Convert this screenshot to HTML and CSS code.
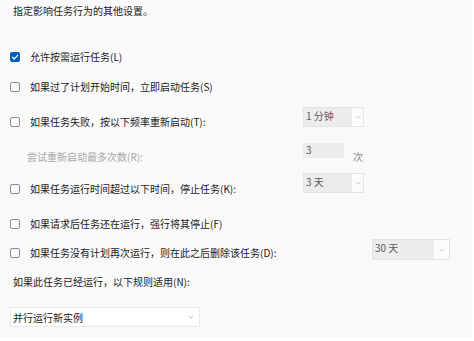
FILE: index.html
```html
<!DOCTYPE html>
<html lang="zh">
<head>
<meta charset="utf-8">
<link rel="stylesheet" href="styles.css">
</head>
<body>
<div class="panel">
  <div class="header">指定影响任务行为的其他设置。</div>

  <div class="row r1">
    <label class="opt"><span class="cb checked"><svg viewBox="0 0 10 10" width="10" height="10"><path d="M2.4 5.2 L4.2 7 L7.8 3.2" fill="none" stroke="#fff" stroke-width="1.2" stroke-linecap="round" stroke-linejoin="round"/></svg></span>允许按需运行任务(L)</label>
  </div>

  <div class="row r2">
    <label class="opt"><span class="cb"></span>如果过了计划开始时间，立即启动任务(S)</label>
  </div>

  <div class="row r3">
    <label class="opt lead w293"><span class="cb"></span>如果任务失败，按以下频率重新启动(T):</label>
    <div class="dd w61"><span class="field">1 分钟</span><span class="chev"><svg viewBox="0 0 6 4" width="6" height="4"><path d="M0.5 0.8 L3 3.2 L5.5 0.8" fill="none" stroke="#b8b8b8" stroke-width="0.8"/></svg></span></div>
  </div>

  <div class="row r4">
    <div class="sub w293">尝试重新启动最多次数(R):</div>
    <div class="tb">3</div>
    <div class="unit">次</div>
  </div>

  <div class="row r5">
    <label class="opt lead5 w293"><span class="cb"></span>如果任务运行时间超过以下时间，停止任务(K):</label>
    <div class="dd w61"><span class="field">3 天</span><span class="chev"><svg viewBox="0 0 6 4" width="6" height="4"><path d="M0.5 0.8 L3 3.2 L5.5 0.8" fill="none" stroke="#b8b8b8" stroke-width="0.8"/></svg></span></div>
  </div>

  <div class="row r6">
    <label class="opt"><span class="cb"></span>如果请求后任务还在运行，强行将其停止(F)</label>
  </div>

  <div class="row r7">
    <label class="opt lead w362"><span class="cb"></span>如果任务没有计划再次运行，则在此之后删除该任务(D):</label>
    <div class="dd w78 h21"><span class="field f61">30 天</span><span class="chev"><svg viewBox="0 0 6 4" width="6" height="4"><path d="M0.5 0.8 L3 3.2 L5.5 0.8" fill="none" stroke="#b8b8b8" stroke-width="0.8"/></svg></span></div>
  </div>

  <div class="rule">如果此任务已经运行，以下规则适用(N):</div>

  <div class="select"><span>并行运行新实例</span><span class="chev2"><svg viewBox="0 0 6 4" width="6" height="4"><path d="M0.5 0.8 L3 3.2 L5.5 0.8" fill="none" stroke="#a8a8a8" stroke-width="0.8"/></svg></span></div>
</div>
</body>
</html>
```

FILE: styles.css
```css
html, body {
  margin: 0;
  padding: 0;
  background: #ffffff;
}

body {
  font-family: "Noto Sans CJK SC", "Noto Sans", sans-serif;
  font-size: 10px;
  color: #1b1b1b;
}

.panel {
  width: 472px;
  height: 338px;
  box-sizing: border-box;
  background: #f9f9f9;
  padding-left: 10px;
  overflow: hidden;
}

.header {
  height: 22px;
  line-height: 22px;
  padding-left: 3px;
}

.row {
  display: flex;
  align-items: flex-start;
}

.opt {
  display: flex;
  align-items: center;
  height: 12px;
  line-height: 12px;
  white-space: nowrap;
}

.cb {
  width: 10px;
  height: 10px;
  box-sizing: border-box;
  border: 1px solid #8d8d8d;
  border-radius: 2px;
  background: #fbfbfb;
  margin-right: 10px;
  flex: none;
  display: flex;
}

.cb.checked {
  border: none;
  background: #005fb8;
}

.w293 { width: 293px; flex: none; }
.w362 { width: 362px; flex: none; }

.r1 { margin-top: 29px; }
.r2 { margin-top: 18px; }
.r3 { margin-top: 14px; }
.r4 { margin-top: 15px; }
.r5 { margin-top: 10px; }
.r6 { margin-top: 23px; }
.r7 { margin-top: 9px; }

.lead { margin-top: 9px; }
.lead5 { margin-top: 10px; }
.r7 .lead { margin-top: 8px; }

.dd {
  height: 20px;
  box-sizing: border-box;
  border: 1px solid #e4e4e4;
  background: #fcfcfc;
  display: flex;
  align-items: stretch;
}

.w61 { width: 61px; }
.w78 { width: 78px; }
.h21 { height: 21px; }

.field {
  width: 48px;
  background: #ececec;
  color: #5a5a5a;
  line-height: 16px;
  padding-left: 2px;
  box-sizing: border-box;
  white-space: nowrap;
}

.f61 { width: 61px; }

.chev {
  flex: 1;
  display: flex;
  align-items: center;
  justify-content: center;
}

.sub {
  color: #a8a8a8;
  line-height: 12px;
  height: 12px;
  margin-top: 8px;
  padding-left: 17px;
  box-sizing: border-box;
  white-space: nowrap;
}

.tb {
  width: 41px;
  height: 15px;
  background: #ececec;
  color: #5a5a5a;
  line-height: 13px;
  padding-left: 3px;
  box-sizing: border-box;
}

.unit {
  color: #8a8a8a;
  line-height: 12px;
  margin-top: 8px;
  margin-left: 9px;
}

.rule {
  margin-top: 16px;
  line-height: 12px;
  padding-left: 3px;
}

.select {
  margin-top: 19px;
  width: 190px;
  height: 20px;
  box-sizing: border-box;
  border: 1px solid #e9e9e9;
  background: #ffffff;
  display: flex;
  align-items: center;
  justify-content: space-between;
  padding: 0 5px 0 2px;
  color: #1b1b1b;
}

.chev2 {
  display: flex;
  align-items: center;
}
```
